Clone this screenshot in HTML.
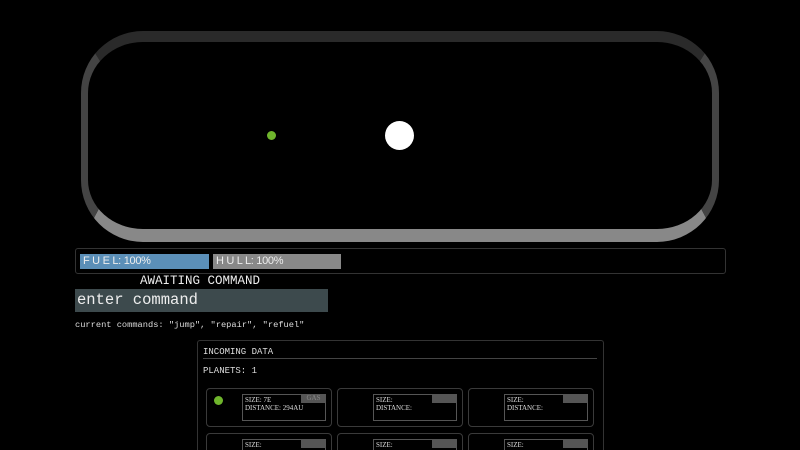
<!DOCTYPE html>
<html style="height:450px;overflow:hidden"><head><style>
body{margin:0;background:#000;width:800px;height:450px;overflow:hidden;position:relative;font-family:"Liberation Mono","DejaVu Sans Mono",monospace;color:#ddd}
.ring{position:absolute;left:81px;top:31px;width:624px;height:187px;border-style:solid;border-width:11px 7px 13px 7px;border-color:#2a2a2a #444 #888 #444;border-radius:62px}
.dot{position:absolute;border-radius:50%}
.bar{position:absolute;left:75px;top:248px;width:649px;height:24px;border:1px solid #333;border-radius:3px}
.meter{position:absolute;top:5px;height:15px;font:11px "Liberation Sans",sans-serif;color:#eee;line-height:15px;padding-left:3px;box-sizing:border-box;letter-spacing:-0.3px}
.panel{position:absolute;left:197px;top:340px;width:405px;height:115px;border:1px solid #333;border-bottom:none;border-radius:3px 3px 0 0}
.card{position:absolute;width:124px;height:37px;border:1px solid #3a3a3a;border-radius:4px}
.inner{position:absolute;left:35px;top:5px;width:84px;height:27px;border:1px solid #555;font:7px "Liberation Serif",serif;color:#ddd;line-height:8px;padding:1px 2px;box-sizing:border-box}
.tag{position:absolute;right:-1px;top:-1px;width:25px;height:9px;background:#555;font:7px "Liberation Serif",serif;color:#888;text-align:center;line-height:9px}
</style></head><body>
<div class="ring"></div>
<div class="dot" style="left:267px;top:131px;width:9px;height:9px;background:#6fb52c"></div>
<div class="dot" style="left:385px;top:121px;width:29px;height:29px;background:#fff"></div>
<div class="bar">
<div class="meter" style="left:4px;width:129px;background:#5b8fb8">F U E L: 100%</div>
<div class="meter" style="left:137px;width:128px;background:#888">H U L L: 100%</div>
</div>
<div style="position:absolute;left:140px;top:274px;font-size:12.5px;color:#eee">AWAITING COMMAND</div>
<div style="position:absolute;left:75px;top:289px;width:253px;height:23px;background:#3d4a4d;font-size:15.5px;line-height:23px;padding-left:2px;box-sizing:border-box;color:#eee">enter command</div>
<div style="position:absolute;left:75px;top:320px;font-size:8.7px;color:#ddd">current commands: "jump", "repair", "refuel"</div>
<div class="panel">
<div style="position:absolute;left:5px;top:6px;font-size:9px">INCOMING DATA</div>
<div style="position:absolute;left:5px;top:17px;width:394px;border-top:1px solid #444"></div>
<div style="position:absolute;left:5px;top:25px;font-size:9px">PLANETS: 1</div>
<div class="card" style="left:8px;top:47px"><div class="dot" style="left:7px;top:7px;width:9px;height:9px;background:#6fb52c"></div><div class="inner">SIZE: 7E<br>DISTANCE: 294AU<div class="tag">GAS</div></div></div>
<div class="card" style="left:139px;top:47px"><div class="inner">SIZE:<br>DISTANCE:<div class="tag"></div></div></div>
<div class="card" style="left:270px;top:47px"><div class="inner">SIZE:<br>DISTANCE:<div class="tag"></div></div></div>
<div class="card" style="left:8px;top:92px"><div class="inner">SIZE:<br>DISTANCE:<div class="tag"></div></div></div>
<div class="card" style="left:139px;top:92px"><div class="inner">SIZE:<br>DISTANCE:<div class="tag"></div></div></div>
<div class="card" style="left:270px;top:92px"><div class="inner">SIZE:<br>DISTANCE:<div class="tag"></div></div></div>
</div>
</body></html>
